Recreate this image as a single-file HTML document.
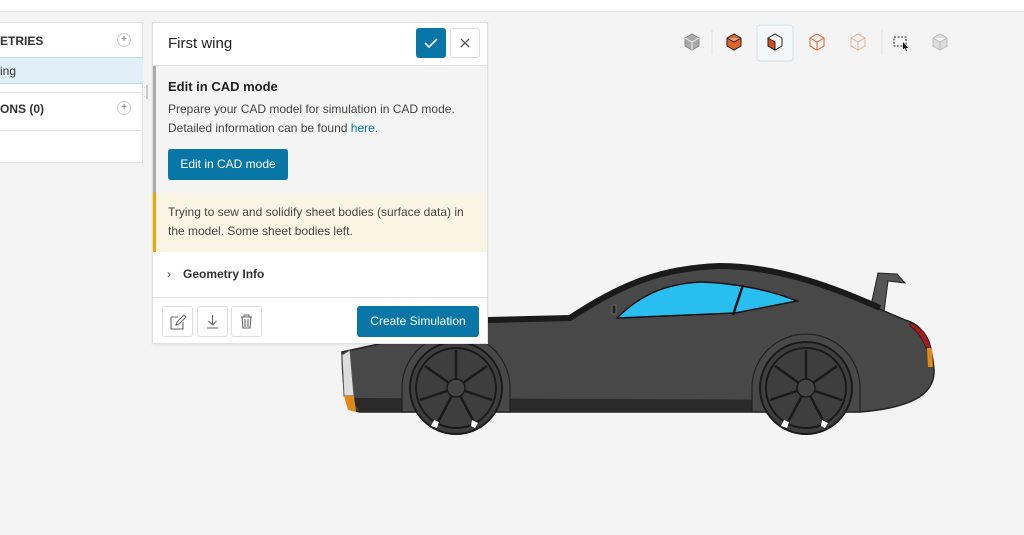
<!DOCTYPE html>
<html><head><meta charset="utf-8"><style>
*{box-sizing:border-box;margin:0;padding:0}
body{width:1024px;height:535px;background:#f4f4f4;font-family:"Liberation Sans",sans-serif;position:relative;overflow:hidden;color:#333}
.top{position:absolute;left:0;top:0;width:1024px;height:12px;background:#fff;border-bottom:1px solid #e3e3e3}
.lp{position:absolute;left:0;width:143px;background:#fff;border:1px solid #e2e2e2;border-left:none;z-index:2}
.plus{position:absolute;right:11px;width:14px;height:14px;border:1px solid #ccc;border-radius:50%;font-size:10px;line-height:12px;text-align:center;color:#666}
.panel{position:absolute;left:152px;top:22px;width:336px;height:322px;background:#fff;border:1px solid #e2e2e2;box-shadow:0 1px 3px rgba(0,0,0,.08);z-index:3}
.btn{position:absolute;background:#0877a8;color:#fff;border-radius:3px;font-size:12.5px;text-align:center}
.ib{position:absolute;width:31px;height:31px;border:1px solid #ddd;border-radius:3px;background:#fff}
</style></head><body>
<div class="top"></div>
<div class="lp" style="top:22px;height:109px">
 <div style="position:absolute;top:11px;left:0;font-size:12px;font-weight:bold;color:#333">ETRIES</div>
 <div class="plus" style="top:10px">+</div>
 <div style="position:absolute;top:34px;left:0;width:143px;height:27px;background:#e1eff7;border-top:1px solid #bcdcea;border-bottom:1px solid #bcdcea;font-size:12px;line-height:26px">ing</div>
 <div style="position:absolute;top:69px;left:0;width:143px;height:1px;background:#e4e4e4"></div>
 <div style="position:absolute;top:79px;left:0;font-size:12px;font-weight:bold">ONS (0)</div>
 <div class="plus" style="top:78px">+</div>
</div>
<div class="lp" style="top:130px;height:33px"></div>
<div style="position:absolute;left:146px;top:85px;width:2px;height:14px;border-left:1px solid #ccc;border-right:1px solid #ccc"></div>

<div class="panel">
 <div style="position:absolute;left:15px;top:12px;font-size:15px;color:#222">First wing</div>
 <div class="btn" style="left:263px;top:5px;width:30px;height:30px">
  <svg width="30" height="30"><path d="M9 15l4 4 8-8" stroke="#fff" stroke-width="1.6" fill="none"/></svg></div>
 <div class="ib" style="left:297px;top:5px;width:30px;height:30px"><svg width="28" height="28"><path d="M10 10l8 8M18 10l-8 8" stroke="#555" stroke-width="1.3"/></svg></div>
 <div style="position:absolute;left:0;top:42px;width:334px;height:1px;background:#e4e4e4"></div>
 <div style="position:absolute;left:0;top:43px;width:334px;height:127px;background:#f4f4f4;border-left:3px solid #aaa"></div>
 <div style="position:absolute;left:15px;top:56px;font-size:13px;font-weight:bold;color:#222">Edit in CAD mode</div>
 <div style="position:absolute;left:15px;top:77px;font-size:12px;line-height:19px;color:#444;width:315px">Prepare your CAD model for simulation in CAD mode. Detailed information can be found <span style="color:#0877a8">here</span>.</div>
 <div class="btn" style="left:15px;top:126px;width:120px;height:31px;line-height:31px;font-size:12px">Edit in CAD mode</div>
 <div style="position:absolute;left:0;top:170px;width:334px;height:59px;background:#fbf5e5;border-left:3px solid #e8a800"></div>
 <div style="position:absolute;left:15px;top:180px;font-size:12px;line-height:19px;color:#444;width:310px">Trying to sew and solidify sheet bodies (surface data) in the model. Some sheet bodies left.</div>
 <div style="position:absolute;left:14px;top:244px;font-size:12px;color:#555">›</div>
 <div style="position:absolute;left:30px;top:244px;font-size:12px;font-weight:bold;color:#333">Geometry Info</div>
 <div style="position:absolute;left:0;top:274px;width:334px;height:1px;background:#e4e4e4"></div>
 <div class="ib" style="left:9px;top:283px"><svg width="29" height="29"><path d="M8 10h7M8 10v12h12v-7" stroke="#666" fill="none" stroke-width="1.1"/><path d="M13 18l1-3 7-7 2 2-7 7z" stroke="#666" fill="none" stroke-width="1.1"/></svg></div>
 <div class="ib" style="left:44px;top:283px"><svg width="29" height="29"><path d="M14.5 8v10M10.5 14l4 4 4-4M9 21h11" stroke="#666" fill="none" stroke-width="1.1"/></svg></div>
 <div class="ib" style="left:78px;top:283px"><svg width="29" height="29"><path d="M9 10h11M12 10v-2h5v2M10 10l1 11h7l1-11M13 12v8M16 12v8" stroke="#666" fill="none" stroke-width="1.1"/></svg></div>
 <div class="btn" style="left:204px;top:283px;width:122px;height:31px;line-height:31px;font-size:12px">Create Simulation</div>
</div>

<svg style="position:absolute;left:0;top:0;z-index:1" width="1024" height="535">
 <rect x="757" y="25" width="36" height="36" rx="3" fill="#f4f7f9" stroke="#cfe3ec"/>
 <g stroke-width="1"><path d="M685 38l7-4 7 4v8l-7 4-7-4z" fill="#aaa" stroke="#888"/><path d="M685 38l7 4 7-4M692 42v8" stroke="#eee" fill="none"/>
 <path d="M727 38l7-4 7 4v8l-7 4-7-4z" fill="#e0622a" stroke="#222"/><path d="M727 38l7 4 7-4" fill="#f0a080" stroke="#222"/>
 <path d="M768 38l7-4 7 4v8l-7 4-7-4z" fill="#fff" stroke="#222"/><path d="M768 38l7 4v8l-7-4z" fill="#d0501e" stroke="#222"/>
 <path d="M810 38l7-4 7 4v8l-7 4-7-4zM810 38l7 4 7-4M817 42v8" fill="none" stroke="#e0622a"/>
 <path d="M851 38l7-4 7 4v8l-7 4-7-4zM851 38l7 4 7-4M858 42v8" fill="none" stroke="#eab08e"/>
 <rect x="894" y="37" width="12" height="9" fill="none" stroke="#222" stroke-dasharray="2 1.5"/><path d="M903 42l5 6-2 0 1 3-1 0-1-3-2 1z" fill="#111"/>
 <path d="M933 38l7-4 7 4v8l-7 4-7-4zM933 38l7 4 7-4M940 42v8" fill="#ddd" stroke="#bbb"/></g>
 <line x1="712" y1="30" x2="712" y2="55" stroke="#e2e2e2"/><line x1="882" y1="30" x2="882" y2="55" stroke="#e2e2e2"/>
 <path d="M870 310L878 273L897 274L905 283L888 281L884 312z" fill="#555" stroke="#222"/>
 <path d="M342 352L488 320L570 318C620 285 660 268 720 266C780 266 840 290 870 305L905 320C925 325 932 345 934 370C935 395 910 408 860 412L360 412C347 410 343 400 342 352z" fill="#484848" stroke="#222" stroke-width="1.5"/>
 <path d="M488 320L570 318C620 285 660 268 720 266C780 266 840 290 880 308" fill="none" stroke="#1a1a1a" stroke-width="6"/>
 <path d="M350 397L360 412L850 412L850 400L360 398z" fill="#2a2a2a"/>
 <path d="M342 355L350 350L354 396L344 396z" fill="#ddd" stroke="#555"/>
 <path d="M344 396L354 396L356 412L348 410z" fill="#e08a1a"/>
 <path d="M910 322C922 328 928 335 931 348L926 348C922 338 918 332 910 326z" fill="#b01818" stroke="#222"/>
 <path d="M927 348L932 348L933 367L928 367z" fill="#e08a1a"/>
 <path d="M617 318C640 295 665 284 700 282C740 283 775 292 797 301L735 313z" fill="#28bff0" stroke="#111" stroke-width="1.5"/>
 <line x1="743" y1="285" x2="733" y2="315" stroke="#111" stroke-width="2.5"/>
 <rect x="612" y="305" width="4" height="9" rx="1" fill="#222" stroke="#666"/>
 <g fill="#484848" stroke="#222" stroke-width="1.2">
  <path d="M402 412L402 388A54 54 0 0 1 510 388L510 412z"/>
  <path d="M752 412L752 388A54 54 0 0 1 860 388L860 412z"/>
 </g>
 <g id="w">
  <circle cx="456" cy="388" r="46" fill="#3e3e3e" stroke="#1a1a1a" stroke-width="2"/>
  <circle cx="456" cy="388" r="40" fill="#3e3e3e" stroke="#1a1a1a" stroke-width="2"/>
  <g stroke="#1a1a1a" stroke-width="2.5">
   <line x1="456" y1="388" x2="456" y2="350"/><line x1="456" y1="388" x2="487" y2="366"/><line x1="456" y1="388" x2="492" y2="400"/>
   <line x1="456" y1="388" x2="474" y2="422"/><line x1="456" y1="388" x2="438" y2="422"/><line x1="456" y1="388" x2="420" y2="400"/><line x1="456" y1="388" x2="425" y2="366"/>
  </g>
  <path d="M434 420l5 2-2 6-6-2zM472 420l6 3-3 5-4-2z" fill="#fff"/>
  <circle cx="456" cy="388" r="9" fill="#444" stroke="#1a1a1a" stroke-width="1.5"/>
 </g>
 <use href="#w" x="350" y="0"/>
</svg>
</body></html>
